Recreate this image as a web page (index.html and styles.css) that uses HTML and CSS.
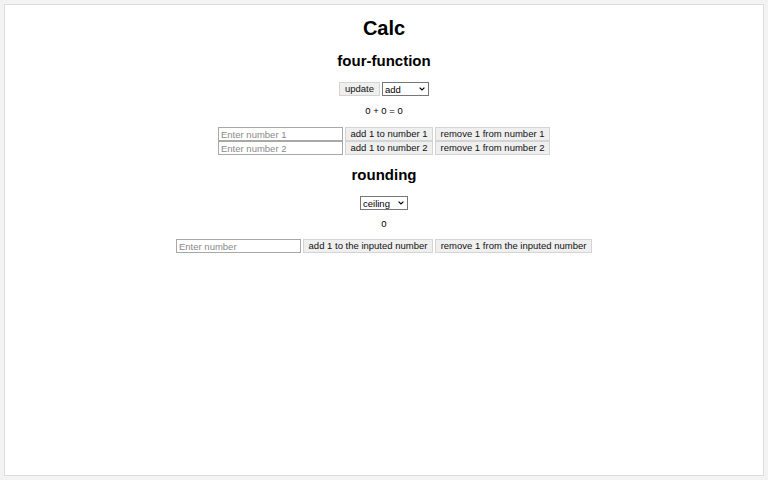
FILE: index.html
```html
<!DOCTYPE html>
<html>
<head>
<meta charset="utf-8">
<link rel="stylesheet" href="styles.css">
</head>
<body>
<div class="card">
  <h1 class="title">Calc</h1>
  <h2 class="section">four-function</h2>
  <div class="row r-update">
    <button class="btn btn-update">update</button>
    <span class="selwrap">
      <select class="sel sel-op"><option>add</option><option>subtract</option><option>multiply</option><option>divide</option></select>
      <svg class="chev" width="6" height="4" viewBox="0 0 6 4"><path d="M0.6 0.6 L3 3 L5.4 0.6" fill="none" stroke="#000" stroke-width="1.2"/></svg>
    </span>
  </div>
  <p class="result">0 + 0 = 0</p>
  <div class="grid-rows">
    <div class="row tight">
      <input class="num" placeholder="Enter number 1">
      <button class="btn b-add">add 1 to number 1</button>
      <button class="btn b-rem">remove 1 from number 1</button>
    </div>
    <div class="row tight">
      <input class="num" placeholder="Enter number 2">
      <button class="btn b-add">add 1 to number 2</button>
      <button class="btn b-rem">remove 1 from number 2</button>
    </div>
  </div>
  <h2 class="section s2">rounding</h2>
  <div class="row r-select">
    <span class="selwrap">
      <select class="sel sel-round"><option>ceiling</option><option>floor</option><option>round</option></select>
      <svg class="chev" width="6" height="4" viewBox="0 0 6 4"><path d="M0.6 0.6 L3 3 L5.4 0.6" fill="none" stroke="#000" stroke-width="1.2"/></svg>
    </span>
  </div>
  <p class="result r2">0</p>
  <div class="row r-last">
    <input class="num" placeholder="Enter number">
    <button class="btn b-add2">add 1 to the inputed number</button>
    <button class="btn b-rem2">remove 1 from the inputed number</button>
  </div>
</div>
</body>
</html>
```
FILE: styles.css
```css
html, body {
  margin: 0;
  padding: 0;
  background: #f3f3f3;
  height: 100%;
}
body {
  padding: 4px;
  box-sizing: border-box;
  font-family: "Liberation Sans", Arial, sans-serif;
  color: #000;
}
.card {
  background: #fff;
  border: 1px solid #dcdcdc;
  height: 100%;
  box-sizing: border-box;
  display: flex;
  flex-direction: column;
  align-items: center;
}
.title {
  font-size: 20px;
  line-height: 24px;
  font-weight: bold;
  margin: 11px 0 0 0;
}
.section {
  font-size: 15px;
  line-height: 18px;
  font-weight: bold;
  margin: 12px 0 0 0;
}
.s2 { margin-top: 11px; }
.row {
  display: flex;
  gap: 2px;
  align-items: center;
}
.r-update { margin-top: 12px; }
.result {
  font-size: 9.5px;
  line-height: 12px;
  margin: 9px 0 0 0;
}
.grid-rows {
  margin-top: 10px;
  display: flex;
  flex-direction: column;
  gap: 0;
}
.r-select { margin-top: 12px; }
.r2 { margin-top: 8px; }
.r-last { margin-top: 9px; }
.btn {
  font-family: "Liberation Sans", Arial, sans-serif;
  font-size: 9.5px;
  height: 14px;
  padding: 0;
  line-height: 12px;
  white-space: nowrap;
  background: #efefef;
  border: 1px solid #d4d4d4;
  border-radius: 0;
  color: #111;
  margin: 0;
}
.btn-update { width: 41px; }
.b-add { width: 88px; }
.b-rem { width: 115px; }
.b-add2 { width: 130px; }
.b-rem2 { width: 157px; }
.num {
  font-family: "Liberation Sans", Arial, sans-serif;
  font-size: 9.5px;
  width: 125px;
  height: 14px;
  box-sizing: border-box;
  padding: 0 2px;
  border: 1px solid #a8a8a8;
  margin: 0;
  outline: none;
}
.num::placeholder { color: #8a8a8a; }
.selwrap {
  position: relative;
  display: inline-flex;
}
.sel {
  -webkit-appearance: none;
  appearance: none;
  font-family: "Liberation Sans", Arial, sans-serif;
  font-size: 9.5px;
  height: 14px;
  box-sizing: border-box;
  border: 1px solid #767676;
  background: #fff;
  padding: 0 2px;
  margin: 0;
  border-radius: 0;
  color: #000;
}
.chev {
  position: absolute;
  right: 4px;
  top: 5px;
  pointer-events: none;
}
.sel-op { width: 47px; }
.sel-round { width: 48px; }
```
